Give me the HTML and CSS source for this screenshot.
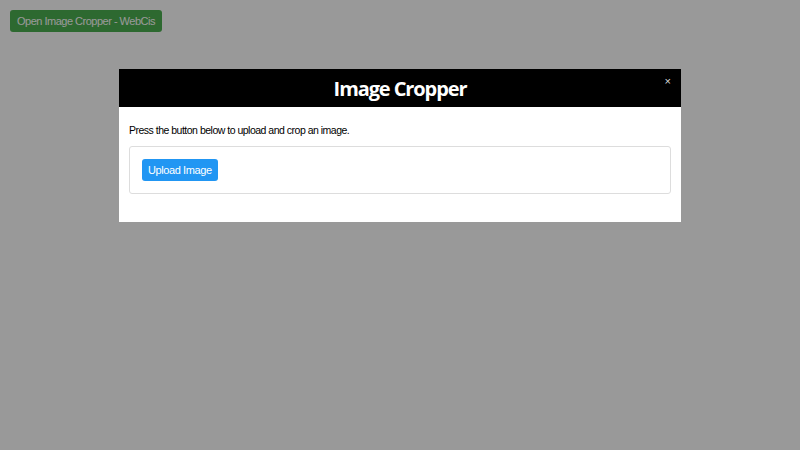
FILE: index.html
```html
<!DOCTYPE html>
<html lang="en">
<head>
    <meta charset="UTF-8">
    <meta name="viewport" content="width=device-width, initial-scale=1.0">
    <title>Image Cropper - WebCis</title>
    <link rel="stylesheet" href="styles.css">
</head>
<body>
    <button class="open-btn">Open Image Cropper - WebCis</button>

    <div class="overlay">
        <div class="modal">
            <div class="modal-header">
                <h2>Image Cropper</h2>
                <span class="close">&times;</span>
            </div>
            <div class="modal-body">
                <p>Press the button below to upload and crop an image.</p>
                <div class="upload-box">
                    <button class="upload-btn">Upload Image</button>
                </div>
            </div>
        </div>
    </div>
</body>
</html>
```

FILE: styles.css
```css
body {
    font-family: "Liberation Sans", Arial, sans-serif;
    margin: 0;
    padding: 10px;
    background: #fff;
}
.open-btn {
    background: #4caf50;
    color: #fff;
    border: none;
    border-radius: 3px;
    font-family: inherit;
    font-size: 11px;
    letter-spacing: -0.5px;
    padding: 0 7px;
    height: 22px;
}
.overlay {
    position: fixed;
    top: 0;
    left: 0;
    right: 0;
    bottom: 0;
    background: rgba(0, 0, 0, 0.4);
    padding-top: 69px;
}
.modal {
    width: 562px;
    margin: 0 auto;
    background: #fff;
}
.modal-header {
    position: relative;
    background: #000;
    color: #fff;
    height: 38px;
    display: flex;
    align-items: center;
    justify-content: center;
}
.modal-header h2 {
    margin: 0;
    font-family: "Open Sans", sans-serif;
    font-size: 20px;
    font-weight: bold;
    letter-spacing: -1.1px;
}
.close {
    position: absolute;
    top: 6px;
    right: 10px;
    font-size: 11px;
    color: #ddd;
}
.modal-body {
    padding: 10px 10px 28px;
}
.modal-body p {
    margin: 7px 0 10px;
    font-size: 10.5px;
    letter-spacing: -0.5px;
}
.upload-box {
    border: 1px solid #ddd;
    border-radius: 3px;
    padding: 12px;
}
.upload-btn {
    background: #2196f3;
    color: #fff;
    border: none;
    border-radius: 3px;
    font-family: inherit;
    font-size: 11px;
    letter-spacing: -0.4px;
    height: 22px;
    padding: 0 6px;
}
```
